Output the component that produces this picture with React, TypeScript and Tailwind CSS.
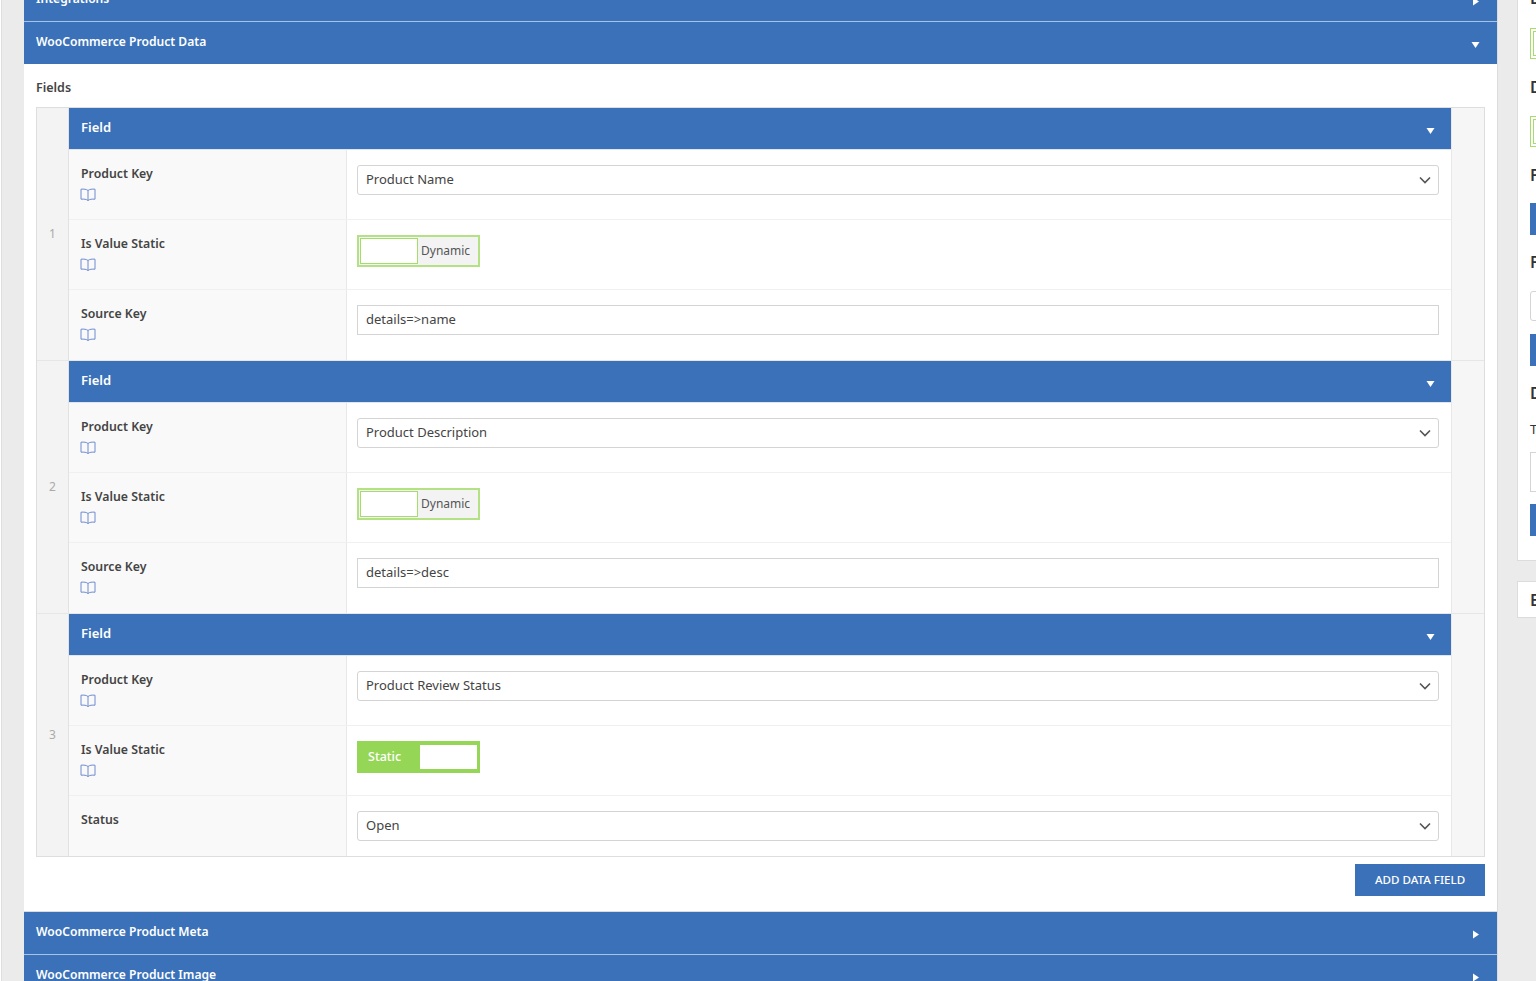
import React from "react";

interface Row {
  label: string;
  help?: boolean;
  kind: "select" | "input" | "dynamic" | "static";
  value?: string;
}

const blocks: Row[][] = [
  [
    { label: "Product Key", help: true, kind: "select", value: "Product Name" },
    { label: "Is Value Static", help: true, kind: "dynamic" },
    { label: "Source Key", help: true, kind: "input", value: "details=>name" },
  ],
  [
    { label: "Product Key", help: true, kind: "select", value: "Product Description" },
    { label: "Is Value Static", help: true, kind: "dynamic" },
    { label: "Source Key", help: true, kind: "input", value: "details=>desc" },
  ],
  [
    { label: "Product Key", help: true, kind: "select", value: "Product Review Status" },
    { label: "Is Value Static", help: true, kind: "static" },
    { label: "Status", kind: "select", value: "Open" },
  ],
];

const BookIcon = () => (
  <svg width="16" height="14" viewBox="0 0 16 14" fill="none" stroke="#6f8ad0" strokeWidth="1" className="ml-[-1px] block">
    <path d="M8 2.500C6.500 1.200 4 .9 1 1.200v10c3-.3 5.500 0 7 1.300 1.500-1.300 4-1.600 7-1.300v-10c-3-.3-5.500 0-7 1.300zM8 2.500v10" />
  </svg>
);

const Caret = ({ open }: { open: boolean }) => (
  <svg width="9" height="9" viewBox="0 0 9 9" fill="#fff" className="block">
    {open ? <path d="M.5 2h8L4.500 8z" /> : <path d="M2 .5v8L8 4.500z" />}
  </svg>
);

const Chevron = () => (
  <svg width="12" height="8" viewBox="0 0 12 8" fill="none" stroke="#555" strokeWidth="1.600" className="block">
    <path d="M1 1.500l5 5 5-5" />
  </svg>
);

const SectionHeader = ({ title, open }: { title: string; open?: boolean }) => (
  <div className="flex h-[42px] items-center justify-between bg-[#3a71b9] pl-[12px] pr-[17px] text-[12.100px] font-semibold text-white">
    <span className="mb-[1px]">{title}</span>
    <span className="mt-[3px]">
      <Caret open={!!open} />
    </span>
  </div>
);

const Value = ({ row }: { row: Row }) => {
  if (row.kind === "select") {
    return (
      <div className="flex h-[30px] items-center justify-between rounded-[3px] border border-[#d4d4d4] bg-white pl-[8px] pr-[7px] text-[13px] text-[#444]">
        <span>{row.value}</span>
        <Chevron />
      </div>
    );
  }
  if (row.kind === "input") {
    return (
      <div className="flex h-[30px] items-center border border-[#d4d4d4] bg-white px-[8px] text-[13px] text-[#444]">
        {row.value}
      </div>
    );
  }
  if (row.kind === "dynamic") {
    return (
      <div className="flex h-[32px] w-[123px] items-center gap-[3px] border-2 border-[#b4e184] bg-[#f3f3f3] p-[1px] text-[12px] text-[#555]">
        <span className="h-[26px] w-[58px] border border-[#a6dc6c] bg-white" />
        <span>Dynamic</span>
      </div>
    );
  }
  return (
    <div className="flex h-[32px] w-[123px] items-center justify-between bg-[#96d657] p-[3px] pl-[11px] text-[12.500px] font-medium text-white">
      <span>Static</span>
      <span className="h-[24px] w-[57px] bg-white" />
    </div>
  );
};

const FieldBlock = ({ rows, index }: { rows: Row[]; index: number }) => (
  <div className="flex border-b border-[#e6e6e6] last:border-b-0">
    <div className="flex w-[32px] shrink-0 items-center justify-center border-r border-[#e2e2e2] bg-[#f3f3f3] text-[12px] text-[#aaa]">
      {index}
    </div>
    <div className="min-w-0 flex-1">
      <div className="flex h-[42px] items-center justify-between border-b border-[#dfe6f0] bg-[#3a71b9] pl-[12px] pr-[16px] text-[13px] font-semibold text-white">
        <span className="mb-[1px]">Field</span>
        <span className="mt-[3px]">
          <Caret open />
        </span>
      </div>
      {rows.map((row, i) => (
        <div
          key={i}
          className={`flex border-b border-[#f0f0f0] last:border-b-0 ${row.help ? "h-[70px]" : "h-[60px]"}`}
        >
          <div className="w-[278px] shrink-0 border-r border-[#e8e8e8] bg-[#f9f9f9] px-[12px] pt-[15px]">
            <div className="text-[12.300px] leading-[18px] font-semibold text-[#444]">{row.label}</div>
            {row.help && (
              <div className="mt-[5px]">
                <BookIcon />
              </div>
            )}
          </div>
          <div className="flex-1 pl-[10px] pr-[12px] pt-[15px]">
            <Value row={row} />
          </div>
        </div>
      ))}
    </div>
    <div className="w-[33px] shrink-0 border-l border-[#e8e8e8] bg-[#f6f6f6]" />
  </div>
);

export default function App() {
  return (
    <div
      className="h-[981px] w-[1536px] overflow-hidden bg-[#ebebeb] text-[#444]"
      style={{ fontFamily: '"Noto Sans", "Open Sans", sans-serif' }}
    >
      <div className="mt-[-21px] flex items-start">
        <div className="h-[1024px] w-[2px] shrink-0 border-l border-r border-l-white border-r-[#dedede]" />
        <div className="ml-[22px] w-[1474px] shrink-0 border-r border-[#dcdcdc]">
          <div className="border-b border-[#a9c3e3]">
            <SectionHeader title="Integrations" />
          </div>
          <SectionHeader title="WooCommerce Product Data" open />
          <div className="bg-white px-[12px] pb-[15px] pt-[15px]">
            <div className="mb-[10px] text-[12.500px] leading-[18px] font-semibold">Fields</div>
            <div className="border border-[#dedede]">
              {blocks.map((rows, i) => (
                <FieldBlock key={i} rows={rows} index={i + 1} />
              ))}
            </div>
            <div className="mt-[7px] flex justify-end">
              <button className="h-[32px] w-[130px] bg-[#3a71b9] text-[11.600px] font-medium text-white">
                ADD DATA FIELD
              </button>
            </div>
          </div>
          <div className="border-y border-[#a9c3e3] border-t-[#dcdcdc]">
            <SectionHeader title="WooCommerce Product Meta" />
          </div>
          <SectionHeader title="WooCommerce Product Image" />
        </div>

        <div className="ml-[19px] flex-1 text-[16px] font-semibold text-[#333]">
          <div className="h-[582px] overflow-hidden border border-[#dcdcdc] bg-white pl-[12px] pt-[8px]">
            <div className="leading-[20px]">D</div>
            <div className="mt-[20px] h-[31px] w-[20px] border border-[#a6dc6c] p-[2px]">
              <div className="h-full border border-[#a6dc6c]" />
            </div>
            <div className="mt-[18px] leading-[20px]">D</div>
            <div className="mt-[19px] h-[31px] w-[20px] border border-[#a6dc6c] p-[2px]">
              <div className="h-full border border-[#a6dc6c]" />
            </div>
            <div className="mt-[18px] leading-[20px]">F</div>
            <div className="mt-[18px] h-[32px] bg-[#3a71b9]" />
            <div className="mt-[17px] leading-[20px]">F</div>
            <div className="mt-[19px] h-[30px] rounded-l-[3px] border border-[#d4d4d4] bg-white" />
            <div className="mt-[13px] h-[32px] bg-[#3a71b9]" />
            <div className="mt-[17px] leading-[20px]">D</div>
            <div className="mt-[18px] text-[13px] font-normal leading-[16px]">T</div>
            <div className="mt-[15px] h-[40px] border border-[#d4d4d4] bg-white" />
            <div className="mt-[12px] h-[32px] bg-[#3a71b9]" />
          </div>
          <div className="mt-[20px] flex h-[37px] items-center border border-[#dcdcdc] bg-white pl-[12px]">E</div>
        </div>
      </div>
    </div>
  );
}
